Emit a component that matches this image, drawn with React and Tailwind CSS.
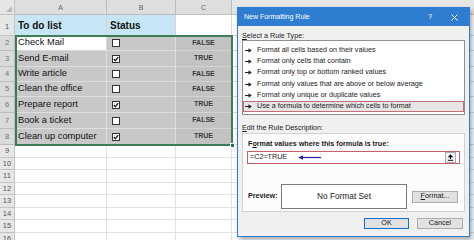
import React from "react";

const tasks = [
	{ name: "Check Mail", done: false, h: "h-[15px]" },
	{ name: "Send E-mail", done: true, h: "h-[16px]" },
	{ name: "Write article", done: false, h: "h-[15px]" },
	{ name: "Clean the office", done: false, h: "h-[15px]" },
	{ name: "Prepare report", done: true, h: "h-[16px]" },
	{ name: "Book a ticket", done: false, h: "h-[16px]" },
	{ name: "Clean up computer", done: true, h: "h-[16px]" }
];

const emptyRows = [9, 10, 11, 12, 13, 14, 15, 16];

const rules = [
	"Format all cells based on their values",
	"Format only cells that contain",
	"Format only top or bottom ranked values",
	"Format only values that are above or below average",
	"Format only unique or duplicate values",
	"Use a formula to determine which cells to format"
];

const CheckBox = ({ checked }) =>
	<span className="ml-[5px] flex h-[8px] w-[8px] items-center justify-center border border-[#333] bg-white">
		{checked &&
			<svg width="6" height="6" viewBox="0 0 6 6">
				<path d="M0.8 3 L2.4 4.6 L5.3 1.2" fill="none" stroke="#111" strokeWidth="1.3" />
			</svg>}
	</span>;

const RuleArrow = () =>
	<svg width="7" height="5" viewBox="0 0 7 5" className="shrink-0">
		<path d="M0 2.5 H4" stroke="#222" strokeWidth="1" />
		<path d="M3.5 0.3 L6.8 2.5 L3.5 4.7 Z" fill="#222" />
	</svg>;

const Sheet = () =>
	<div className="flex flex-col">
		{/* column headers */}
		<div className="flex h-[15px]">
			<div className="relative w-[15px] shrink-0 border-r border-b border-[#c4c4c4] bg-[#e6e6e6]">
				<svg className="absolute right-[2px] bottom-[2px]" width="6" height="6">
					<path d="M6 0 V6 H0 Z" fill="#b8b8b8" />
				</svg>
			</div>
			<div className="flex w-[92px] shrink-0 items-end justify-center border-r border-b border-[#bdbdbd] bg-[#dedede] pb-[1px] text-[7px] text-[#55685c]">
				A
			</div>
			<div className="flex w-[69px] shrink-0 items-end justify-center border-r border-b border-[#bdbdbd] bg-[#dedede] pb-[1px] text-[7px] text-[#55685c]">
				B
			</div>
			<div className="flex w-[56px] shrink-0 items-end justify-center border-r border-b border-[#bdbdbd] bg-[#dedede] pb-[1px] text-[7px] text-[#55685c]">
				C
			</div>
			<div className="flex-1 border-b border-[#c4c4c4] bg-[#e6e6e6]" />
		</div>

		{/* row 1 */}
		<div className="flex h-[21px]">
			<div className="flex w-[15px] shrink-0 items-end justify-center border-r border-b border-[#c4c4c4] bg-[#e6e6e6] pb-[3px] text-[7.5px] text-[#555]">
				1
			</div>
			<div className="flex w-[92px] shrink-0 items-end border-r border-b border-[#d4d4d4] bg-[#c6e6f5] pb-[2px] pl-[3px] text-[10px] font-bold text-[#111]">
				To do list
			</div>
			<div className="flex w-[69px] shrink-0 items-end border-r border-b border-[#d4d4d4] bg-[#c6e6f5] pb-[2px] pl-[3px] text-[10px] font-bold text-[#111]">
				Status
			</div>
			<div className="w-[56px] shrink-0 border-r border-b border-[#d9d9d9] bg-white" />
			<div className="flex-1 border-b border-[#d9d9d9] bg-white" />
		</div>

		{/* task rows */}
		{tasks.map((task, i) =>
			<div key={task.name} className={`flex ${task.h}`}>
				<div className="flex w-[15px] shrink-0 items-center justify-center border-r border-b border-[#bdbdbd] bg-[#dadada] text-[7.5px] text-[#5c7f69]">
					{i + 2}
				</div>
				<div
					className={
						i === 0
							? "flex w-[92px] shrink-0 items-center border-r border-b border-[#d9d9d9] bg-white pl-[3px] text-[9.3px] text-[#111]"
							: "flex w-[92px] shrink-0 items-center border-r border-b border-[#dedede] bg-[#c8c8c8] pl-[3px] text-[9.3px] text-[#111]"
					}>
					{task.name}
				</div>
				<div className="flex w-[69px] shrink-0 items-center border-r border-b border-[#dedede] bg-[#c8c8c8]">
					<CheckBox checked={task.done} />
				</div>
				<div className="flex w-[56px] shrink-0 items-center justify-center border-r border-b border-[#d2d2d2] bg-[#c2c2c2] text-[7px] font-semibold text-[#3a3a3a]">
					{task.done ? "TRUE" : "FALSE"}
				</div>
				<div className="flex-1 border-b border-[#d9d9d9] bg-white" />
			</div>
		)}

		{/* empty rows */}
		{emptyRows.map(n =>
			<div key={n} className="flex h-[12.5px] shrink-0">
				<div className="flex w-[15px] shrink-0 items-center justify-center border-r border-b border-[#c4c4c4] bg-[#e6e6e6] text-[7.5px] text-[#555]">
					{n}
				</div>
				<div className="w-[92px] shrink-0 border-r border-b border-[#e2e2e2]" />
				<div className="w-[69px] shrink-0 border-r border-b border-[#e2e2e2]" />
				<div className="w-[56px] shrink-0 border-r border-b border-[#e2e2e2]" />
				<div className="flex-1 border-b border-[#e2e2e2]" />
			</div>
		)}
	</div>;

const Dialog = () =>
	<div className="absolute top-[7px] left-[237px] flex h-[230px] w-[233px] flex-col border border-[#2f7dd1] bg-[#f0f0f0] text-[7.2px] text-[#1a1a1a] shadow-[2px_3px_5px_rgba(0,0,0,0.35)]">
		{/* title bar */}
		<div className="flex h-[18px] shrink-0 items-center bg-[#2f7dd1] pl-[6px] text-[7px] text-white">
			<span>New Formatting Rule</span>
			<span className="ml-auto w-[10px] text-center text-[7.5px]">?</span>
			<svg className="mr-[11px] ml-[16px]" width="7" height="7" viewBox="0 0 7 7">
				<path d="M0.5 0.5 L6.5 6.5 M6.5 0.5 L0.5 6.5" stroke="#fff" strokeWidth="1" />
			</svg>
		</div>

		<div className="flex flex-1 flex-col px-[4px]">
			<div className="mt-[5px] h-[9px] leading-[9px]">
				<span className="underline">S</span>elect a Rule Type:
			</div>

			{/* rule list */}
			<div className="h-[75px] border border-[#8f8f8f] bg-white pt-[3.5px]">
				{rules.map((rule, i) =>
					<div
						key={rule}
						className={
							i === 5
								? "flex h-[11.3px] items-center gap-[5px] border border-[#c66b78] bg-[#e6e6e6] pl-[1px]"
								: "flex h-[11.3px] items-center gap-[5px] border border-transparent pl-[1px]"
						}>
						<RuleArrow />
						<span>{rule}</span>
					</div>
				)}
			</div>

			<div className="mt-[7.5px] h-[9px] leading-[9px]">
				<span className="underline">E</span>dit the Rule Description:
			</div>

			{/* description panel */}
			<div className="mt-[1.5px] flex h-[79px] flex-col border border-[#d2d2d2] bg-[#fcfcfc] px-[4px] pt-[4.5px]">
				<div className="h-[9px] pl-[1px] leading-[9px] font-bold">
					F<span className="underline">o</span>rmat values where this formula is true:
				</div>
				<div className="mt-[3.5px] flex h-[13px] items-center border border-[#c95e6b] bg-white pl-[2px]">
					<span>=C2=TRUE</span>
					<svg className="ml-[11px]" width="23" height="5" viewBox="0 0 23 5">
						<path d="M3 2.5 H23" stroke="#2323a8" strokeWidth="1.2" />
						<path d="M0 2.5 L5 0.2 L5 4.8 Z" fill="#2323a8" />
					</svg>
					<span className="mr-[3px] ml-auto flex h-[11px] w-[11px] items-center justify-center border border-[#adadad] bg-[#f3f3f3]">
						<svg width="7" height="7" viewBox="0 0 7 7">
							<path d="M3.5 0.3 L6.3 3.2 L0.7 3.2 Z" fill="#111" />
							<path d="M2.8 3 H4.2 V5 H2.8 Z" fill="#111" />
							<path d="M0.8 6.3 H6.2" stroke="#111" strokeWidth="1" />
						</svg>
					</span>
				</div>
				<div className="mt-[20px] flex h-[25px] items-center">
					<span className="w-[34px] shrink-0 pl-[1px] font-bold">Preview:</span>
					<div className="flex h-[25px] w-[126px] items-center justify-center border border-[#7a7a7a] bg-white text-[8.3px] text-[#222]">
						No Format Set
					</div>
					<div className="ml-[5px] flex h-[12px] w-[46px] items-center justify-center border border-[#adadad] bg-[#e1e1e1]">
						<span className="underline">F</span>ormat...
					</div>
				</div>
			</div>

			{/* buttons */}
			<div className="mt-[6px] flex justify-end gap-[8px] pr-[2px]">
				<div className="flex h-[11px] w-[45px] items-center justify-center border border-[#0a6fd1] bg-[#e1e1e1]">
					OK
				</div>
				<div className="flex h-[11px] w-[46px] items-center justify-center border border-[#adadad] bg-[#e1e1e1]">
					Cancel
				</div>
			</div>
		</div>
	</div>;

export default function App() {
	return (
		<div className="relative h-[240px] w-[474px] overflow-hidden bg-white font-['Liberation_Sans',Arial,sans-serif]">
			<Sheet />
			{/* selection A2:C8 */}
			<div className="absolute top-[35px] left-[15px] h-[111px] w-[218px] border-2 border-[#3c7d55]" />
			<div className="absolute top-[143px] left-[230px] h-[5px] w-[5px] border border-white bg-[#217346]" />
			<Dialog />
		</div>
	);
}
